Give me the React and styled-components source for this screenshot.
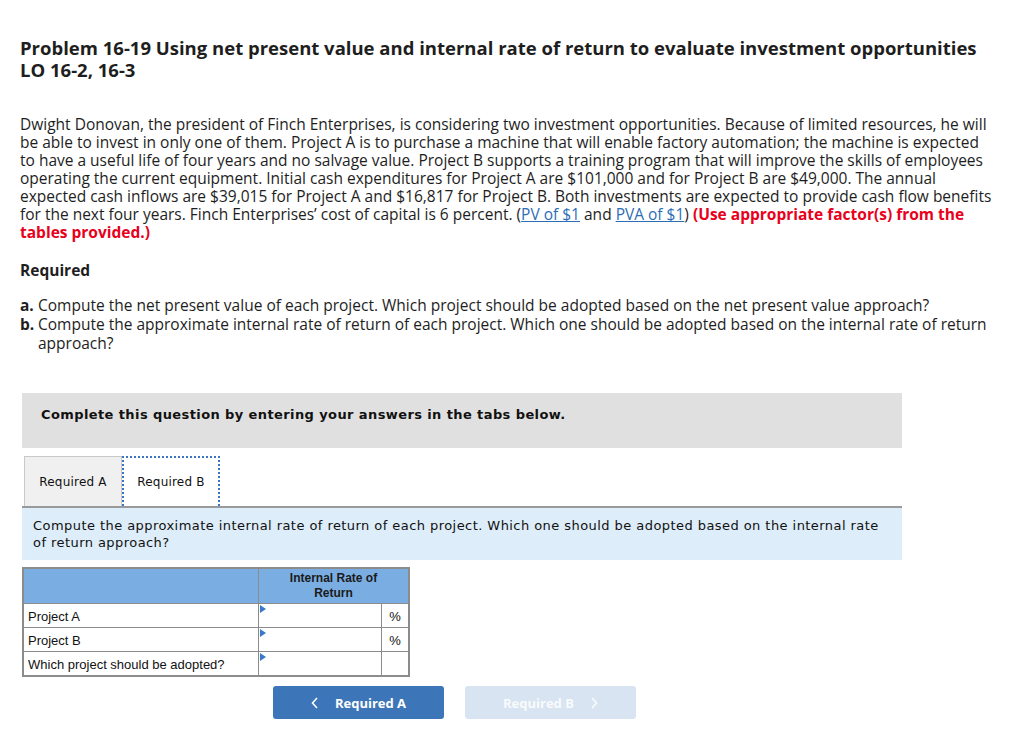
import React from 'react';
import styled, { createGlobalStyle } from 'styled-components';

const GlobalStyle = createGlobalStyle`
  body {
    margin: 0;
    background: #fff;
    font-family: "Open Sans", "Liberation Sans", sans-serif;
    color: #222;
  }
`;

const Page = styled.div`
  width: 1024px;
  height: 755px;
  padding: 37px 0 0 20px;
  box-sizing: border-box;
  overflow: hidden;
`;

const Title = styled.h1`
  margin: 0;
  font-size: 18.5px;
  line-height: 22px;
  font-weight: 700;
  color: #1e1e1e;
`;

const Para = styled.p`
  margin: 34px 0 0;
  font-size: 15.5px;
  line-height: 18px;
  color: #1e1e1e;
  white-space: nowrap;
`;

const Link = styled.a`
  color: #2d6db5;
  text-decoration: underline;
`;

const Red = styled.span`
  color: #e8001c;
  font-weight: 700;
`;

const Heading = styled.h2`
  margin: 20px 0 0;
  font-size: 15.5px;
  line-height: 18px;
  font-weight: 700;
  color: #1e1e1e;
`;

const List = styled.ol`
  margin: 17px 0 0;
  padding: 0;
  list-style: none;
  font-size: 15.5px;
  line-height: 19px;
  color: #1e1e1e;
`;

const Item = styled.li`
  display: flex;
  gap: 5px;
`;

const Letter = styled.span`
  font-weight: 700;
  width: 13px;
  flex: none;
`;

const Question = styled.div`
  width: 880px;
  margin: 40px 0 0 2px;
  font-family: "DejaVu Sans", Verdana, sans-serif;
`;

const Banner = styled.div`
  height: 55px;
  box-sizing: border-box;
  padding: 14px 19px 0;
  background: #e0e0e0;
  font-size: 13px;
  line-height: 16px;
  font-weight: 700;
  letter-spacing: 0.4px;
  color: #111;
`;

const Tabs = styled.div`
  display: flex;
  margin-top: 8px;
  padding-left: 2px;
  border-bottom: 2px solid #9a9a9a;
`;

const Tab = styled.div`
  width: 98px;
  height: 50px;
  box-sizing: border-box;
  display: flex;
  align-items: center;
  justify-content: center;
  font-size: 12px;
  letter-spacing: 0.2px;
  color: #111;
  background: ${p => (p.$active ? '#fff' : '#f0f0f0')};
  border: ${p => (p.$active ? '2px dotted #3a76c4' : '1px solid #c8c8c8')};
  border-bottom: none;
`;

const Prompt = styled.div`
  height: 52px;
  box-sizing: border-box;
  padding: 9px 11px 0;
  background: #ddedf9;
  font-size: 13px;
  line-height: 17px;
  letter-spacing: 0.44px;
  color: #111;
`;

const Table = styled.table`
  margin-top: 7px;
  border-collapse: collapse;
  border: 2px solid #8c8c8c;
  font-family: "Liberation Sans", Arial, sans-serif;
  font-size: 13px;
  color: #111;
`;

const HeadCell = styled.th`
  height: 34px;
  padding: 0;
  background: #7aaee2;
  border: 1px solid #8c8c8c;
  font-size: 12px;
  line-height: 15px;
  font-weight: 700;
  color: #1a1a1a;
  text-align: center;
  vertical-align: middle;
`;

const LabelCell = styled.td`
  width: 230px;
  height: 23px;
  padding: 0 0 0 4px;
  border: 1px solid #8c8c8c;
  vertical-align: bottom;
  line-height: 21px;
`;

const InputCell = styled.td`
  position: relative;
  width: 122px;
  padding: 0;
  border: 1px solid #8c8c8c;
  background: #fff;
`;

const Marker = styled.span`
  position: absolute;
  left: 1px;
  top: 1px;
  width: 0;
  height: 0;
  border-top: 4px solid transparent;
  border-bottom: 4px solid transparent;
  border-left: 6px solid #3a78c8;
`;

const UnitCell = styled.td`
  width: 26px;
  padding: 0;
  border: 1px solid #8c8c8c;
  text-align: center;
  vertical-align: bottom;
  line-height: 21px;
`;

const Nav = styled.div`
  display: flex;
  gap: 21px;
  margin-top: 9px;
  padding-left: 251px;
`;

const NavButton = styled.button`
  width: 171px;
  height: 33px;
  display: flex;
  align-items: center;
  justify-content: center;
  gap: 16px;
  border: none;
  border-radius: 3px;
  background: ${p => (p.$disabled ? '#d8e4f1' : '#3d76b8')};
  color: ${p => (p.$disabled ? 'rgba(255,255,255,0.85)' : '#fff')};
  font-family: "Open Sans", "Liberation Sans", sans-serif;
  font-size: 13px;
  font-weight: 700;
  padding: 0;
`;

const Chevron = ({ dir }) => (
  <svg width="8" height="12" viewBox="0 0 8 12" fill="none" stroke="currentColor" strokeWidth="1.6">
    {dir === 'left' ? <path d="M6 1L1.5 6L6 11" /> : <path d="M2 1L6.5 6L2 11" />}
  </svg>
);

const rows = [
  { label: 'Project A', unit: '%' },
  { label: 'Project B', unit: '%' },
  { label: 'Which project should be adopted?', unit: '' },
];

export default function App() {
  return (
    <Page>
      <GlobalStyle />
      <Title>
        Problem 16-19 Using net present value and internal rate of return to evaluate investment opportunities
        <br />
        LO 16-2, 16-3
      </Title>
      <Para>
        Dwight Donovan, the president of Finch Enterprises, is considering two investment opportunities. Because of limited resources, he will
        <br />
        be able to invest in only one of them. Project A is to purchase a machine that will enable factory automation; the machine is expected
        <br />
        to have a useful life of four years and no salvage value. Project B supports a training program that will improve the skills of employees
        <br />
        operating the current equipment. Initial cash expenditures for Project A are $101,000 and for Project B are $49,000. The annual
        <br />
        expected cash inflows are $39,015 for Project A and $16,817 for Project B. Both investments are expected to provide cash flow benefits
        <br />
        for the next four years. Finch Enterprises’ cost of capital is 6 percent. (<Link>PV of $1</Link> and <Link>PVA of $1</Link>){' '}
        <Red>(Use appropriate factor(s) from the</Red>
        <br />
        <Red>tables provided.)</Red>
      </Para>
      <Heading>Required</Heading>
      <List>
        <Item>
          <Letter>a.</Letter>
          <span>Compute the net present value of each project. Which project should be adopted based on the net present value approach?</span>
        </Item>
        <Item>
          <Letter>b.</Letter>
          <span>
            Compute the approximate internal rate of return of each project. Which one should be adopted based on the internal rate of return
            <br />
            approach?
          </span>
        </Item>
      </List>
      <Question>
        <Banner>Complete this question by entering your answers in the tabs below.</Banner>
        <Tabs>
          <Tab>Required A</Tab>
          <Tab $active>Required B</Tab>
        </Tabs>
        <Prompt>
          Compute the approximate internal rate of return of each project. Which one should be adopted based on the internal rate
          <br />
          of return approach?
        </Prompt>
        <Table>
          <thead>
            <tr>
              <HeadCell />
              <HeadCell colSpan={2}>
                Internal Rate of
                <br />
                Return
              </HeadCell>
            </tr>
          </thead>
          <tbody>
            {rows.map(r => (
              <tr key={r.label}>
                <LabelCell>{r.label}</LabelCell>
                <InputCell>
                  <Marker />
                </InputCell>
                <UnitCell>{r.unit}</UnitCell>
              </tr>
            ))}
          </tbody>
        </Table>
        <Nav>
          <NavButton>
            <Chevron dir="left" />
            Required A
          </NavButton>
          <NavButton $disabled>
            Required B
            <Chevron dir="right" />
          </NavButton>
        </Nav>
      </Question>
    </Page>
  );
}
